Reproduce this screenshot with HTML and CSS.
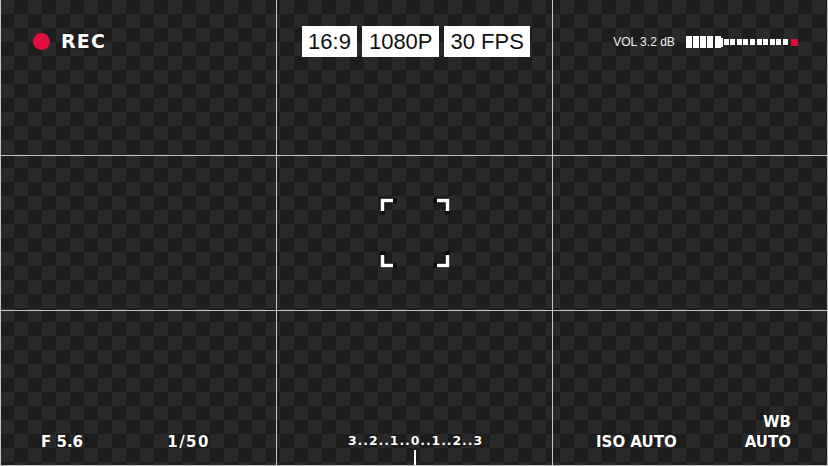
FILE: index.html
```html
<!DOCTYPE html>
<html>
<head>
<meta charset="utf-8">
<link rel="stylesheet" href="styles.css">
</head>
<body>
<div class="frame">
  <div class="cell c1">
    <div class="rec">
      <span class="rec-dot"></span>
      <span class="rec-text">REC</span>
    </div>
  </div>
  <div class="cell c2">
    <div class="badges">
      <span class="badge">16:9</span>
      <span class="badge">1080P</span>
      <span class="badge">30 FPS</span>
    </div>
  </div>
  <div class="cell c3">
    <div class="vol">
      <span class="vol-text">VOL 3.2 dB</span>
      <div class="meter">
        <span class="bar"></span><span class="bar"></span><span class="bar"></span><span class="bar"></span><span class="bar"></span>
        <span class="bar-line"></span>
        <span class="sq"></span><span class="sq"></span><span class="sq"></span><span class="sq"></span><span class="sq"></span>
        <span class="sq"></span><span class="sq"></span><span class="sq"></span><span class="sq"></span><span class="sq"></span>
        <span class="sq-red"></span>
      </div>
    </div>
  </div>
  <div class="cell c4"></div>
  <div class="cell c5">
    <svg class="focus" width="70" height="70" viewBox="0 0 70 70">
      <g fill="none" stroke="#000" stroke-width="5.5" stroke-linecap="square" opacity="0.6">
        <path d="M2.5 14 V2.5 H14"/>
        <path d="M56 2.5 H67.5 V14"/>
        <path d="M2.5 56 V67.5 H14"/>
        <path d="M56 67.5 H67.5 V56"/>
      </g>
      <g fill="none" stroke="#fff" stroke-width="3.5" stroke-linecap="butt">
        <path d="M2.5 13 V2.5 H13"/>
        <path d="M57 2.5 H67.5 V13"/>
        <path d="M2.5 57 V67.5 H13"/>
        <path d="M57 67.5 H67.5 V57"/>
      </g>
    </svg>
  </div>
  <div class="cell c6"></div>
  <div class="cell c7">
    <span class="info">F 5.6</span>
    <span class="info wide">1/50</span>
  </div>
  <div class="cell c8">
    <span class="scale">3..2..1..0..1..2..3</span>
    <span class="tick"></span>
  </div>
  <div class="cell c9">
    <span class="info">ISO AUTO</span>
    <span class="info wb">WB<br>AUTO</span>
  </div>
</div>
</body>
</html>
```
FILE: styles.css
```css
html, body {
  margin: 0;
  padding: 0;
  background: #1e1e1e;
}

.frame {
  width: 828px;
  height: 466px;
  box-sizing: border-box;
  border: 1px solid #c4c4c4;
  border-top: 0;
  display: grid;
  grid-template-columns: 276px 276px 274px;
  grid-template-rows: 156px 155px 154px;
  background-color: #1d1d1d;
  background-image: conic-gradient(#1d1d1d 25%, #292929 0 50%, #1d1d1d 0 75%, #292929 0);
  background-size: 28px 28px;
  background-position: -1px 0;
  font-family: "DejaVu Sans", sans-serif;
  color: #fff;
  overflow: hidden;
}

.cell {
  box-sizing: border-box;
  display: flex;
}

.c1, .c2, .c4, .c5, .c7, .c8 {
  border-right: 1px solid #c4c4c4;
}

.c1, .c2, .c3, .c4, .c5, .c6 {
  border-bottom: 1px solid #c4c4c4;
}

/* REC */
.c1 {
  padding: 33px 0 0 32px;
  align-items: flex-start;
}

.rec {
  display: flex;
  align-items: center;
  gap: 11px;
  height: 17px;
}

.rec-dot {
  width: 17px;
  height: 17px;
  border-radius: 50%;
  background: #e0103c;
}

.rec-text {
  font-weight: bold;
  font-size: 19px;
  line-height: 17px;
  letter-spacing: 1.2px;
  text-shadow: 0 0 2px rgba(0,0,0,0.8);
}

/* Badges */
.c2 {
  justify-content: center;
  align-items: flex-start;
  padding: 26px 0 0 3px;
}

.badges {
  display: flex;
  gap: 5px;
}

.badge {
  background: #fff;
  color: #111;
  font-family: "Liberation Sans", Arial, sans-serif;
  font-size: 22px;
  height: 31px;
  line-height: 32px;
  padding: 0 6.5px;
  box-sizing: border-box;
}

/* Volume */
.c3 {
  justify-content: flex-end;
  align-items: flex-start;
  padding: 36px 29px 0 0;
}

.vol {
  display: flex;
  align-items: center;
  height: 12px;
}

.vol-text {
  font-family: "Liberation Sans", Arial, sans-serif;
  font-size: 12px;
  color: #eee;
  margin-right: 11px;
  line-height: 12px;
}

.meter {
  display: flex;
  align-items: center;
  height: 12px;
}

.bar {
  width: 6px;
  height: 12px;
  background: #fff;
  margin-right: 1.2px;
}

.bar-line {
  width: 2px;
  height: 9px;
  background: #fff;
  margin-right: 1px;
  margin-left: -1.2px;
}

.sq {
  width: 5px;
  height: 6px;
  background: #fff;
  margin-right: 1.6px;
}

.sq-red {
  width: 7px;
  height: 7px;
  background: #d8103a;
  margin-left: 1.5px;
}

/* Focus */
.c5 {
  justify-content: center;
  align-items: center;
  padding: 0 0 1px 0;
}

.focus {
  display: block;
}

/* Bottom info */
.info {
  font-weight: bold;
  font-size: 15px;
  line-height: 20px;
  text-shadow: 0 0 2px rgba(0,0,0,0.8);
}

.wide {
  letter-spacing: 1.5px;
}

.c7 {
  align-items: flex-end;
  justify-content: space-between;
  padding: 0 66px 13px 40px;
}

.c8 {
  flex-direction: column;
  align-items: center;
  justify-content: flex-end;
  padding-left: 1px;
}

.scale {
  font-weight: bold;
  font-size: 12.5px;
  letter-spacing: 0.9px;
  line-height: 14px;
  margin-right: -1px;
  text-shadow: 0 0 2px rgba(0,0,0,0.8);
}

.tick {
  width: 2px;
  height: 15px;
  background: #fff;
  margin-top: 2px;
}

.c9 {
  align-items: flex-end;
  justify-content: space-between;
  padding: 0 36px 13px 43px;
}

.wb {
  text-align: right;
}
```
